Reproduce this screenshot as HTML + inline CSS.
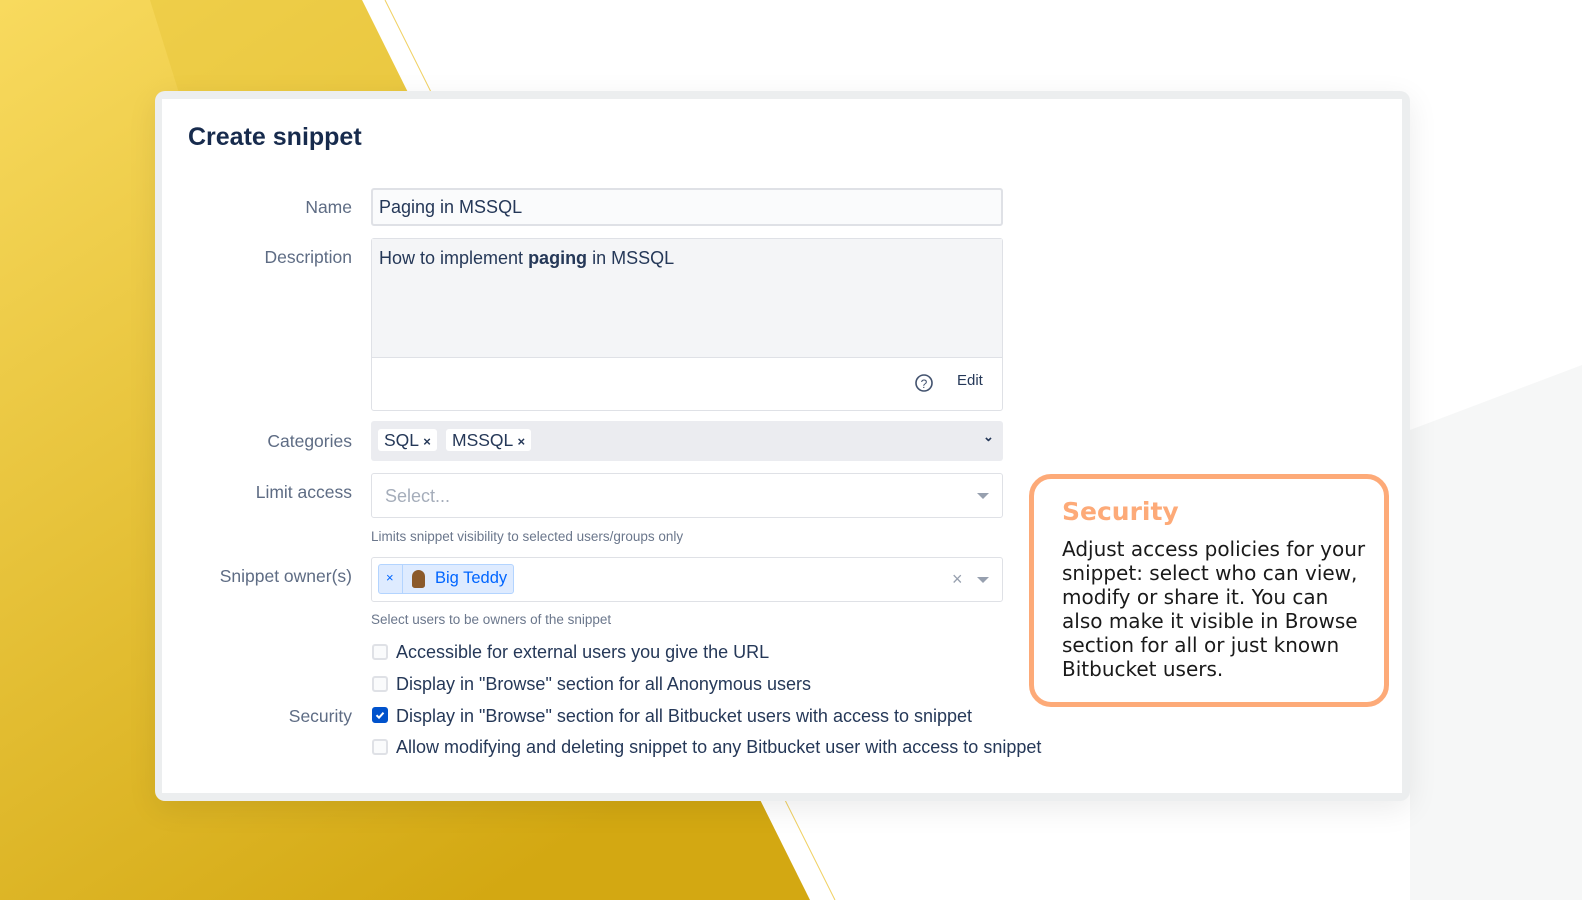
<!DOCTYPE html><html><head><style>
*{margin:0;padding:0;box-sizing:border-box}
body{width:1582px;height:900px;position:relative;overflow:hidden;background:#fff;font-family:"Liberation Sans",sans-serif;color:#172b4d}
.a{position:absolute}
.lbl{position:absolute;right:1230px;font-size:17.5px;color:#5e6c84;text-align:right;white-space:nowrap}
.in{position:absolute;left:371px;width:632px;border:2px solid #dfe1e6;border-radius:3px;background:#fafbfc}
.t{position:absolute;font-size:18px;white-space:nowrap;color:#253858}
.cb{position:absolute;left:372px;width:16px;height:16px;border:2px solid #dfe1e6;border-radius:3px;background:#fafbfc}
.help{position:absolute;left:371px;font-size:13.5px;color:#6b778c}
.tag{position:absolute;top:429px;height:22px;background:#fff;border-radius:3px;font-size:17.5px;padding:0 6px;line-height:22px;color:#253858}
</style></head><body>
<svg class="a" style="left:0;top:0" width="1582" height="900">
<defs><linearGradient id="g" x1="0" y1="0" x2="0.6" y2="1"><stop offset="0" stop-color="#f8da5e"/><stop offset="1" stop-color="#d3a812"/></linearGradient></defs>
<polygon points="0,0 362,0 810,900 0,900" fill="url(#g)"/>
<polygon points="150,0 362,0 520,320 250,320" fill="#e8c53a" opacity="0.5"/>
<line x1="385" y1="0" x2="835" y2="900" stroke="#f0d060" stroke-width="1"/>
<polygon points="1410,430 1582,365 1582,900 1410,900" fill="#f6f7f7"/>
</svg>
<div class="a" style="left:155px;top:91px;width:1255px;height:710px;background:#eceeef;border-radius:10px;box-shadow:0 8px 30px rgba(0,0,0,0.08)"></div>
<div class="a" style="left:162px;top:99px;width:1240px;height:694px;background:#fff"></div>
<div class="t" style="left:188px;top:123px;font-size:25px;font-weight:bold;color:#172b4d">Create snippet</div>

<div class="lbl" style="top:197px">Name</div>
<div class="in" style="top:188px;height:38px"></div>
<div class="t" style="left:379px;top:197px">Paging in MSSQL</div>

<div class="lbl" style="top:247px">Description</div>
<div class="in" style="top:238px;height:173px;background:#fff;border-width:1px"></div>
<div class="a" style="left:372px;top:239px;width:630px;height:119px;background:#f4f5f7;border-bottom:1px solid #dfe1e6"></div>
<div class="t" style="left:379px;top:248px">How to implement <b>paging</b> in MSSQL</div>
<svg class="a" style="left:914px;top:373px" width="20" height="20"><circle cx="10" cy="10" r="8" fill="none" stroke="#42526e" stroke-width="1.6"/><text x="10" y="15" font-size="12" text-anchor="middle" fill="#42526e" font-family="Liberation Sans">?</text></svg>
<div class="t" style="left:957px;top:372px;font-size:15px">Edit</div>

<div class="lbl" style="top:431px">Categories</div>
<div class="a" style="left:371px;top:421px;width:632px;height:40px;background:#ebecf0;border-radius:3px"></div>
<div class="tag" style="left:378px">SQL <b style="font-size:13px">×</b></div>
<div class="tag" style="left:446px">MSSQL <b style="font-size:13px">×</b></div>
<div class="t" style="left:983px;top:429px;font-size:13px;font-weight:bold">⌄</div>

<div class="lbl" style="top:482px">Limit access</div>
<div class="in" style="top:473px;height:45px;background:#fff;border-width:1px"></div>
<div class="t" style="left:385px;top:486px;color:#a5adba">Select...</div>
<div class="a" style="left:977px;top:493px;border:6px solid transparent;border-top:6px solid #97a0af;border-bottom:0"></div>
<div class="help" style="top:529px">Limits snippet visibility to selected users/groups only</div>

<div class="lbl" style="top:566px">Snippet owner(s)</div>
<div class="in" style="top:557px;height:45px;background:#fff;border-width:1px"></div>
<div class="a" style="left:378px;top:564px;width:136px;height:30px;background:#deebff;border:1px solid #b3d4ff;border-radius:3px"></div>
<div class="a" style="left:402px;top:565px;width:1px;height:28px;background:#b3d4ff"></div>
<div class="t" style="left:386px;top:570px;font-size:13px;color:#0065ff">×</div>
<div class="a" style="left:412px;top:570px;width:13px;height:18px;background:#8b5a2b;border-radius:7px 7px 3px 3px"></div>
<div class="t" style="left:435px;top:569px;color:#0065ff;font-size:16.5px">Big Teddy</div>
<div class="t" style="left:952px;top:569px;color:#97a0af">×</div>
<div class="a" style="left:977px;top:577px;border:6px solid transparent;border-top:6px solid #97a0af;border-bottom:0"></div>
<div class="help" style="top:612px">Select users to be owners of the snippet</div>

<div class="cb" style="top:644px"></div><div class="t" style="left:396px;top:642px">Accessible for external users you give the URL</div>
<div class="cb" style="top:676px"></div><div class="t" style="left:396px;top:674px">Display in "Browse" section for all Anonymous users</div>
<div class="lbl" style="top:706px">Security</div>
<div class="cb" style="top:707px;background:#0052cc;border-color:#0052cc"></div>
<svg class="a" style="left:372px;top:707px" width="16" height="16"><path d="M4.5 8.2l2.5 2.5 4.5-5" stroke="#fff" stroke-width="2" fill="none"/></svg>
<div class="t" style="left:396px;top:706px">Display in "Browse" section for all Bitbucket users with access to snippet</div>
<div class="cb" style="top:739px"></div><div class="t" style="left:396px;top:737px">Allow modifying and deleting snippet to any Bitbucket user with access to snippet</div>

<div class="a" style="left:1029px;top:474px;width:360px;height:233px;border:5px solid #fdaa78;border-radius:22px;background:#fff"></div>
<div class="a" style="left:1062px;top:497px;font-family:'DejaVu Sans',sans-serif;font-size:25px;font-weight:bold;color:#fdaa78">Security</div>
<div class="a" style="left:1062px;top:537px;width:312px;font-family:'DejaVu Sans',sans-serif;font-size:20px;line-height:24px;color:#1a1a1a">Adjust access policies for your snippet: select who can view, modify or share it. You can also make it visible in Browse section for all or just known Bitbucket users.</div>
</body></html>
